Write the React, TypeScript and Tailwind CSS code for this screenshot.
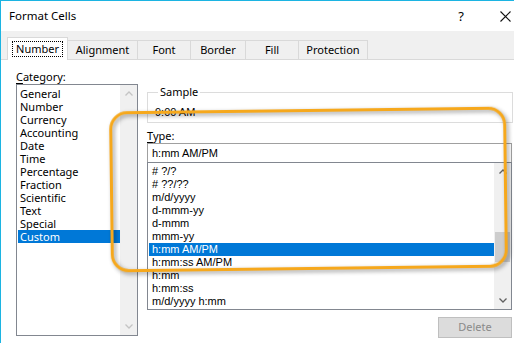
const categories = [
  "General",
  "Number",
  "Currency",
  "Accounting",
  "Date",
  "Time",
  "Percentage",
  "Fraction",
  "Scientific",
  "Text",
  "Special",
  "Custom",
];

const types = [
  "# ?/?",
  "# ??/??",
  "m/d/yyyy",
  "d-mmm-yy",
  "d-mmm",
  "mmm-yy",
  "h:mm AM/PM",
  "h:mm:ss AM/PM",
  "h:mm",
  "h:mm:ss",
  "m/d/yyyy h:mm",
];

const tabs = [
  { label: "Alignment", w: "w-[71px]" },
  { label: "Font", w: "w-[54px]" },
  { label: "Border", w: "w-[56px]" },
  { label: "Fill", w: "w-[54px]" },
  { label: "Protection", w: "w-[70px]" },
];

const Chevron = ({ up, color }: { up?: boolean; color: string }) => (
  <svg width="8" height="5" viewBox="0 0 8 5" className={up ? "" : "rotate-180"}>
    <path d="M0.5 4.5 L4 1 L7.5 4.5" fill="none" stroke={color} strokeWidth="1.3" />
  </svg>
);

const TitleBar = () => (
  <div className="flex h-[30px] items-center justify-between bg-white pl-[8px] pr-[3px] text-[11.5px] text-black">
    <span>Format Cells</span>
    <div className="flex items-center gap-[36px]">
      <span className="text-[13px] leading-none">?</span>
      <svg width="11" height="11" viewBox="0 0 11 11">
        <path d="M0.5 0.5 L10.5 10.5 M10.5 0.5 L0.5 10.5" stroke="#111" strokeWidth="1.1" />
      </svg>
    </div>
  </div>
);

const TabStrip = () => (
  <div className="flex h-[29px] items-end border-b border-[#d9d9d9] bg-[#f0f0f0] pl-[6px] text-[11px]">
    <div className="relative z-10 -mb-px flex h-[23px] w-[61px] items-start justify-center border border-b-0 border-[#d9d9d9] bg-white pt-[3px]">
      <span className="border border-dotted border-black px-[3px] leading-[14px]">Number</span>
    </div>
    {tabs.map((t) => (
      <div
        key={t.label}
        className={`-ml-px flex h-[19px] ${t.w} items-center justify-center border border-b-0 border-[#d9d9d9] bg-[#f0f0f0] pt-px`}
      >
        {t.label}
      </div>
    ))}
  </div>
);

const CategoryList = () => (
  <div className="flex w-[122px] flex-col">
    <div className="leading-[15px]">
      <span className="underline underline-offset-2">C</span>ategory:
    </div>
    <div className="flex h-[252px] border border-[#828790] bg-white">
      <div className="flex w-[103px] flex-col pl-px pt-[2px]">
        {categories.map((c) => (
          <div
            key={c}
            className={`h-[13px] pl-[2px] leading-[13px] ${c === "Custom" ? "bg-[#0078d7] text-white" : ""}`}
          >
            {c}
          </div>
        ))}
      </div>
      <div className="flex w-[17px] flex-col items-center justify-between bg-[#f0f0f0] py-[6px]">
        <Chevron up color="#c4c4c4" />
        <Chevron color="#c4c4c4" />
      </div>
    </div>
  </div>
);

const TypePanel = () => (
  <div className="flex w-[365px] flex-col items-end pt-[16px]">
    <fieldset className="w-[366px] -mr-px h-[38px] border border-[#dcdcdc] pl-[7px]">
      <legend className="ml-[3px] px-[2px] leading-[14px]">Sample</legend>
      <div className="mt-[7px] font-['Liberation_Sans',sans-serif] leading-[13px]">9:00 AM</div>
    </fieldset>
    <div className="mt-[5px] w-full leading-[15px]">
      <span className="underline underline-offset-2">T</span>ype:
    </div>
    <div className="flex h-[20px] w-full items-center border border-[#a0a0a0] bg-white pl-[4px] font-['Liberation_Sans',sans-serif]">
      h:mm AM/PM
    </div>
    <div className="-mt-px flex h-[148px] w-full border border-[#828790] bg-white font-['Liberation_Sans',sans-serif]">
      <div className="flex flex-1 flex-col pl-px pt-[2px]">
        {types.map((t) => (
          <div
            key={t}
            className={`h-[13px] pl-[3px] leading-[13px] ${t === "h:mm AM/PM" ? "bg-[#0078d7] text-white" : ""}`}
          >
            {t}
          </div>
        ))}
      </div>
      <div className="flex w-[17px] flex-col items-center bg-[#f0f0f0]">
        <div className="flex h-[17px] items-center">
          <Chevron up color="#606060" />
        </div>
        <div className="mt-[52px] h-[30px] w-[15px] bg-[#cdcdcd]" />
        <div className="flex-1" />
        <div className="flex h-[17px] items-center">
          <Chevron color="#606060" />
        </div>
      </div>
    </div>
    <div className="mt-[7px] flex h-[21px] w-[74px] items-center justify-center border border-[#bfbfbf] bg-[#dcdcdc] text-[#8a8a8a]">
      Delete
    </div>
  </div>
);

export default function App() {
  return (
    <div className="relative flex h-[343px] w-[514px] flex-col overflow-hidden border-l border-t border-[#1cb4e2] bg-white font-['Noto_Sans',sans-serif] text-[11px] text-black">
      <TitleBar />
      <TabStrip />
      <div className="flex flex-1 gap-[9px] bg-white pl-[15px] pt-[9px]">
        <CategoryList />
        <TypePanel />
      </div>
      <div className="pointer-events-none absolute left-[109px] top-[108px] h-[161px] w-[397px] -rotate-[0.7deg] rounded-[18px] border-[3px] border-[#f6a81c] drop-shadow-[2px_2px_2px_rgba(0,0,0,0.4)]" />
    </div>
  );
}
